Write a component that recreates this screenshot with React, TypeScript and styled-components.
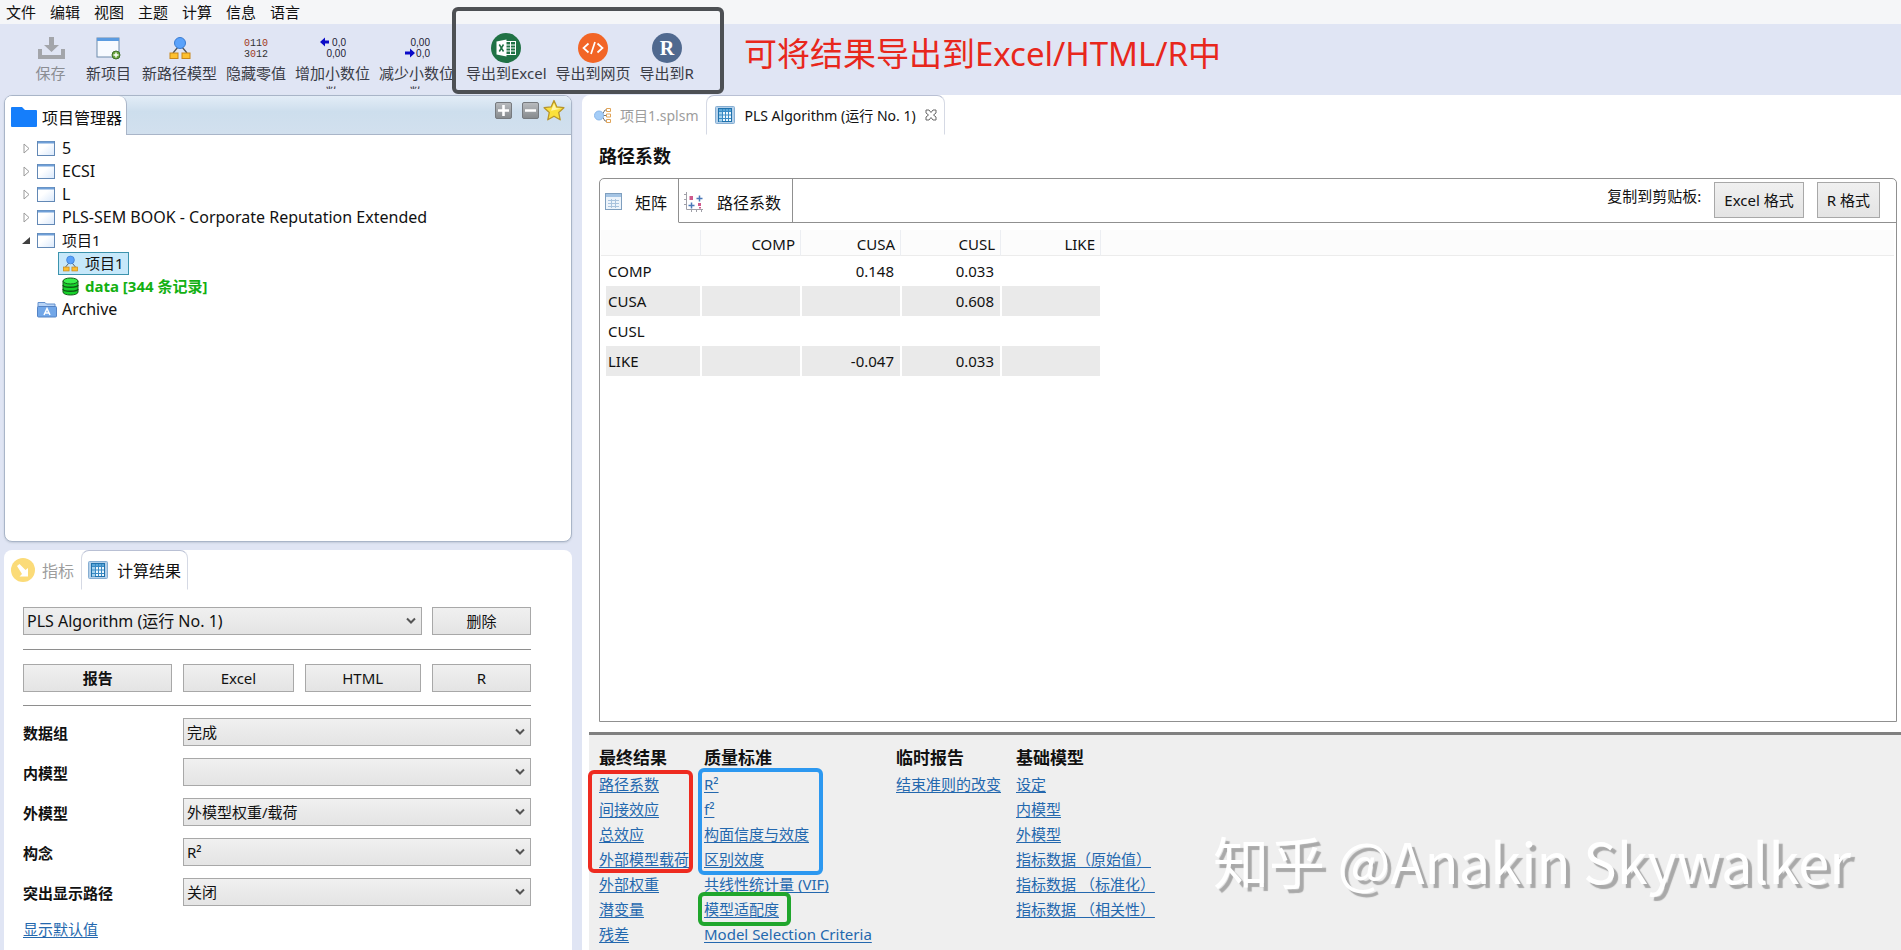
import React from 'react';
import styled, { createGlobalStyle, css } from 'styled-components';

const GlobalStyle = createGlobalStyle`
  *, *::before, *::after { box-sizing: border-box; }
  html, body { margin: 0; padding: 0; }
  body, button, select {
    font-family: "Noto Sans", "Noto Sans CJK SC", sans-serif;
    font-size: 15px;
    color: #111;
  }
  button { padding: 0; border: 0; background: none; cursor: pointer; }
  svg { display: block; flex: none; }
`;

const Page = styled.div`
  display: flex;
  flex-direction: column;
  height: 100vh;
  min-height: 860px;
  overflow: hidden;
  background: #e0e5f4;
`;

const MenuBar = styled.nav`
  display: flex;
  gap: 14px;
  height: 24px;
  padding: 1px 6px 0;
  background: #f5f6f8;
`;

const MenuItem = styled.button`
  height: 22px;
  line-height: 22px;
`;

const Toolbar = styled.div`
  display: flex;
  align-items: flex-start;
  gap: 1px;
  height: 71px;
  padding: 8px 0 0 22px;
`;

const ToolButton = styled.button<{ $muted?: boolean }>`
  display: flex;
  flex-direction: column;
  align-items: center;
  min-width: 57px;
  padding: 0 4px;
  color: ${p => (p.$muted ? '#8b8d93' : '#3a3c46')};
`;

const ToolIcon = styled.span`
  display: flex;
  align-items: center;
  justify-content: center;
  height: 31px;
`;

const ToolLabel = styled.span<{ $wrap?: boolean }>`
  height: 26px;
  line-height: 20px;
  overflow: hidden;
  white-space: nowrap;
  ${p => p.$wrap && css`
    width: 75px;
    white-space: normal;
  `}
`;

const Marked = styled.div<{ $color: string; $inset: string }>`
  position: relative;
  &::after {
    content: '';
    position: absolute;
    inset: ${p => p.$inset};
    border: 4px solid ${p => p.$color};
    border-radius: 6px;
    pointer-events: none;
  }
`;

const ExportGroup = styled(Marked)`
  display: flex;
  gap: 1px;
  margin-left: 3px;
`;

const Callout = styled.p`
  margin: 0 0 0 45px;
  font-size: 33px;
  line-height: 44px;
  color: #e8271c;
  white-space: nowrap;
`;

const Workspace = styled.div`
  flex: 1;
  min-height: 0;
  display: grid;
  grid-template-columns: 568px minmax(0, 1fr);
  gap: 10px;
  padding-left: 4px;
`;

const Sidebar = styled.div`
  display: flex;
  flex-direction: column;
  gap: 8px;
  min-height: 0;
`;

const Explorer = styled.section`
  flex: 1;
  min-height: 0;
  display: flex;
  flex-direction: column;
  overflow: hidden;
  background: #fff;
  border: 1px solid #a9b5c8;
  border-radius: 8px;
  box-shadow: 0 1px 2px #c3cbd9;
`;

const ExplorerHead = styled.header`
  display: flex;
  justify-content: space-between;
  height: 39px;
  background: linear-gradient(#e3edf7, #cddeed 40%, #d2e0ee);
`;

const ExplorerTitle = styled.h2`
  display: flex;
  align-items: center;
  gap: 4px;
  margin: 0;
  padding: 2px 4px 0 6px;
  font-size: 16px;
  font-weight: 400;
  background: #fff;
  border-right: 1px solid #a9b5c8;
  border-radius: 0 8px 0 0;
`;

const HeadFill = styled.div`
  flex: 1;
  display: flex;
  justify-content: flex-end;
  align-items: flex-start;
  gap: 10px;
  padding: 3px 6px 0 0;
  border-bottom: 1px solid #a9b5c8;
`;

const HeadTool = styled.button`
  height: 22px;
  display: flex;
  align-items: center;
`;

const StarTool = styled(HeadTool)`
  margin-left: -6px;
`;

const Tree = styled.ul`
  list-style: none;
  margin: 0;
  padding: 2px 0 0 17px;
`;

const TreeRow = styled.li<{ $level?: number; $latin?: boolean }>`
  display: flex;
  align-items: center;
  gap: 5px;
  height: 23px;
  padding-left: ${p => (p.$level ? 36 : 0)}px;
  line-height: 21px;
  font-size: ${p => (p.$latin ? 16 : 15)}px;
`;

const Twisty = styled.span`
  width: 10px;
`;

const TreeIcon = styled.span`
  width: 20px;
`;

const Leaf = styled.span<{ $selected?: boolean; $data?: boolean }>`
  display: flex;
  align-items: center;
  gap: 6px;
  height: 23px;
  padding: 0 4px 0 3px;
  border: 1px solid ${p => (p.$selected ? '#3c93ad' : 'transparent')};
  background: ${p => (p.$selected ? '#c6e8fa' : 'transparent')};
  color: ${p => (p.$data ? '#12b012' : 'inherit')};
  font-weight: ${p => (p.$data ? 700 : 400)};
`;

const Settings = styled.section`
  background: #fff;
  border-radius: 8px 8px 0 0;
  padding-bottom: 10px;
`;

const TabStrip = styled.div`
  display: flex;
  height: 40px;
`;

const Tab = styled.button<{ $active?: boolean }>`
  display: flex;
  align-items: center;
  gap: 9px;
  height: 40px;
  padding: 0 7px 0 8px;
  font-size: 14px;
  color: ${p => (p.$active ? '#111' : '#9d9d9d')};
  border: 1px solid transparent;
  ${p => p.$active && css`
    border-color: #b9c0d4 #d5d9e4 transparent;
    border-radius: 8px 8px 0 0;
  `}
`;

const SideTab = styled(Tab)`
  gap: ${p => (p.$active ? 9 : 7)}px;
  padding: 0 6px;
  font-size: 16px;
`;

const SettingsBody = styled.div`
  padding: 17px 41px 0 19px;
`;

const RunRow = styled.div`
  display: grid;
  grid-template-columns: 1fr 99px;
  gap: 10px;
  padding-bottom: 14px;
  border-bottom: 1px solid #8e8e8e;
`;

const ExportRow = styled.div`
  display: grid;
  grid-template-columns: 149fr 110fr 116fr 99fr;
  gap: 11px;
  padding: 14px 0 13px;
  border-bottom: 1px solid #8e8e8e;
`;

const PushButton = styled.button<{ $strong?: boolean }>`
  height: 28px;
  padding: 0 9px;
  line-height: 24px;
  background: linear-gradient(#f0f0f0, #e4e4e4);
  border: 1px solid #a8a8a8;
  font-weight: ${p => (p.$strong ? 700 : 400)};
  white-space: nowrap;
`;

const FormRow = styled.div`
  display: grid;
  grid-template-columns: 160px 1fr;
  align-items: center;
  margin-top: 12px;
`;

const FieldLabel = styled.label`
  font-weight: 700;
`;

const SelectBox = styled.span`
  display: grid;
  align-items: center;
  & > * { grid-area: 1 / 1; }
  & > svg { justify-self: end; margin-right: 6px; pointer-events: none; }
`;

const Dropdown = styled.select<{ $large?: boolean }>`
  appearance: none;
  width: 100%;
  height: 28px;
  padding: 0 24px 0 3px;
  font-size: ${p => (p.$large ? 16 : 15)}px;
  background: linear-gradient(#f0f0f0, #e4e4e4);
  border: 1px solid #a8a8a8;
  border-radius: 0;
`;

const Link = styled.a`
  color: #2468ae;
  text-decoration: underline;
  text-underline-offset: 2px;
  white-space: nowrap;
`;

const DefaultsLine = styled.p`
  margin: 12px 0 0;
  line-height: 22px;
`;

const Report = styled.main`
  display: flex;
  flex-direction: column;
  min-width: 0;
  min-height: 0;
  background: #fff;
  border-radius: 8px 0 0 0;
`;

const ReportTabs = styled(TabStrip)`
  padding-left: 3px;
`;

const ReportTitle = styled.h1`
  margin: 8px 0 9px 17px;
  font-size: 18px;
  line-height: 26px;
  font-weight: 700;
`;

const MatrixPanel = styled.section`
  flex: 1;
  min-height: 0;
  margin: 0 4px 10px 17px;
  border: 1px solid #909090;
  border-radius: 5px 5px 0 0;
`;

const MatrixHead = styled.div`
  display: flex;
  height: 44px;
`;

const MatrixTab = styled.button<{ $active?: boolean }>`
  display: flex;
  align-items: center;
  gap: 13px;
  padding: 2px 11px 0 5px;
  font-size: 16px;
  border-right: 1px solid #909090;
  border-bottom: 1px solid ${p => (p.$active ? 'transparent' : '#909090')};
`;

const ClipboardBar = styled.div`
  flex: 1;
  display: flex;
  justify-content: flex-end;
  align-items: flex-start;
  gap: 13px;
  padding: 3px 16px 0 0;
  border-bottom: 1px solid #909090;
`;

const ClipboardLabel = styled.span`
  line-height: 28px;
`;

const FormatButton = styled(PushButton)`
  height: 36px;
`;

const TableHeadBand = styled.div`
  margin: 7px 2px 0 1px;
  background: linear-gradient(#fcfcfc 25px, #ececec 25px) top / 100% 26px no-repeat;
`;

const Matrix = styled.table`
  border-collapse: separate;
  border-spacing: 0;
  table-layout: fixed;
  width: 500px;
  & th, & td { font-weight: 400; background-clip: padding-box; }
  & thead th {
    height: 26px;
    padding: 2px 5px 0;
    text-align: right;
    border-right: 1px solid #eceef2;
    border-bottom: 1px solid #ececec;
  }
  & tbody th { padding: 0 7px 0 2px; text-align: left; border-left: 5px solid #fff; }
  & tbody td { padding: 0 6px; text-align: right; border-left: 1px solid #fff; }
  & tbody th, & tbody td { height: 30px; border-right: 1px solid #fff; }
  & tbody tr:nth-child(even) > * { background-color: #eaeaea; }
`;

const ResultLinks = styled.footer`
  display: flex;
  gap: 36px;
  height: 218px;
  margin-left: 7px;
  padding: 11px 10px 0;
  background: #efefef;
  border-top: 3px solid #808080;
`;

const LinkColumn = styled.div<{ $width?: number }>`
  width: ${p => (p.$width ? p.$width + 'px' : 'auto')};
  line-height: 25px;
  white-space: nowrap;
`;

const LinkHeading = styled.h2`
  margin: 0;
  font-size: 17px;
  line-height: 24px;
  padding-bottom: 2px;
`;

const LinkItem = styled.div`
  height: 25px;
`;

const Watermark = styled.div`
  position: absolute;
  right: 50px;
  bottom: 50px;
  font-family: "Noto Sans CJK SC", sans-serif;
  font-size: 56px;
  line-height: 80px;
  color: #fff;
  text-shadow: 4px 4px 1px #a9a9a9;
  white-space: nowrap;
  pointer-events: none;
`;

const SaveIcon = () => (
  <svg width="28" height="24" viewBox="0 0 28 24">
    <path d="M12 1h5v8h5l-7.500 7L7 9h5zM1 13h4v6h19v-6h4v10H1z" fill="#a3a5aa" />
  </svg>
);

const NewProjectIcon = () => (
  <svg width="26" height="24" viewBox="0 0 26 24">
    <rect x="1" y="2" width="22" height="19" fill="#f7faff" stroke="#6c8bab" />
    <rect x="1" y="2" width="22" height="3" fill="#5b9be0" />
    <circle cx="20" cy="19" r="4" fill="#6aa53f" stroke="#3f6f2c" />
    <path d="M17.500 19h5M20 16.500v5" stroke="#fff" strokeWidth="1.400" />
  </svg>
);

const ModelIcon = ({ size = 24 }: { size?: number }) => (
  <svg width={size} height={size} viewBox="0 0 24 24">
    <path d="M10 11L5 17M14 11l5 6" stroke="#555" strokeWidth="1.300" />
    <circle cx="12" cy="7" r="5.500" fill="#5aa2fb" stroke="#3a7bd0" />
    <rect x="2" y="17" width="8" height="5.500" fill="#fdc02f" stroke="#c8871a" />
    <rect x="14" y="17" width="8" height="5.500" fill="#fdc02f" stroke="#c8871a" />
  </svg>
);

const HideZeroIcon = () => (
  <svg width="26" height="24" viewBox="0 0 26 24" fontFamily="Liberation Mono, monospace" fontSize="10" fill="#333">
    <text x="1" y="10"><tspan fill="#a03a20">0</tspan>11<tspan fill="#a03a20">0</tspan></text>
    <text x="1" y="21">3<tspan fill="#a03a20">0</tspan>12</text>
  </svg>
);

const MoreDecimalsIcon = () => (
  <svg width="28" height="24" viewBox="0 0 28 24" fontFamily="Liberation Sans, sans-serif" fontSize="10" fill="#223">
    <path d="M1 6l5-4.500v3h4v3H6v3z" fill="#0a0ac8" />
    <text x="27" y="10" textAnchor="end">0,0</text>
    <text x="27" y="21" textAnchor="end">0,00</text>
  </svg>
);

const LessDecimalsIcon = () => (
  <svg width="28" height="24" viewBox="0 0 28 24" fontFamily="Liberation Sans, sans-serif" fontSize="10" fill="#223">
    <path d="M12 17l-5-4.500v3H2v3h5v3z" fill="#0a0ac8" />
    <text x="27" y="10" textAnchor="end">0,00</text>
    <text x="27" y="21" textAnchor="end">0,0</text>
  </svg>
);

const ExcelIcon = () => (
  <svg width="30" height="30" viewBox="0 0 30 30">
    <circle cx="15" cy="15" r="15" fill="#207245" />
    <rect x="14" y="8.500" width="10.500" height="13" fill="none" stroke="#fff" />
    <path d="M14 12h10M14 15h10M14 18h10M19.500 8.500v13" stroke="#fff" strokeWidth="1" />
    <path d="M5.500 8.500l10-2v17l-10-2z" fill="#fff" />
    <path d="M8.300 11.500l4.200 7M12.500 11.500l-4.200 7" stroke="#207245" strokeWidth="1.500" />
  </svg>
);

const HtmlIcon = () => (
  <svg width="30" height="30" viewBox="0 0 30 30">
    <circle cx="15" cy="15" r="15" fill="#f26526" />
    <path d="M10.500 10.500L5.500 15l5 4.500M19.500 10.500l5 4.500-5 4.500M17 9l-4 12" fill="none" stroke="#fff" strokeWidth="1.700" />
  </svg>
);

const RIcon = () => (
  <svg width="30" height="30" viewBox="0 0 30 30">
    <circle cx="15" cy="15" r="15" fill="#50698f" />
    <text x="15" y="22" textAnchor="middle" fontFamily="Liberation Serif, serif" fontWeight="700" fontSize="20" fill="#fff">R</text>
  </svg>
);

const FolderIcon = () => (
  <svg width="27" height="22" viewBox="0 0 27 22">
    <path d="M0 2q0-1 1-1h10l3 3h11q1 0 1 1v15q0 1-1 1H1q-1 0-1-1z" fill="#157efb" />
  </svg>
);

const SquareTool = ({ plus }: { plus?: boolean }) => (
  <svg width="17" height="17" viewBox="0 0 17 17">
    <defs>
      <linearGradient id="toolGrey" x1="0" y1="0" x2="0" y2="1">
        <stop offset="0" stopColor="#b9bcbf" />
        <stop offset="1" stopColor="#85898c" />
      </linearGradient>
    </defs>
    <rect x="0.500" y="0.500" width="16" height="16" rx="1.500" fill="url(#toolGrey)" stroke="#767a7e" />
    <path d={plus ? 'M3 8.500h11M8.500 3v11' : 'M3 8.500h11'} stroke="#fff" strokeWidth="2.600" />
  </svg>
);

const StarIcon = () => (
  <svg width="22" height="23" viewBox="0 0 22 23">
    <path d="M11 1.500l2.900 6.400 7 .8-5.200 4.700 1.500 7.400-6.200-3.600-6.200 3.600 1.500-7.400L1.100 8.700l7-.8z" fill="#fbe13c" stroke="#b8962a" strokeWidth="1.300" strokeLinejoin="round" />
    <path d="M11 4.500l1.900 4.600 4.800.6-9.700 2z" fill="#fff6a8" />
  </svg>
);

const ProjectIcon = () => (
  <svg width="19" height="17" viewBox="0 0 19 17">
    <defs>
      <linearGradient id="windowBlue" x1="0" y1="0" x2="1" y2="1">
        <stop offset="0.400" stopColor="#fff" />
        <stop offset="1" stopColor="#d9e8fb" />
      </linearGradient>
    </defs>
    <rect x="0.500" y="1.500" width="17" height="14" fill="url(#windowBlue)" stroke="#6288b5" />
    <path d="M1 2.500h16" stroke="#6f9fd8" strokeWidth="2" />
  </svg>
);

const ClosedTwisty = () => (
  <svg width="9" height="11" viewBox="0 0 9 11">
    <path d="M2 1l5 4.500L2 10z" fill="#fff" stroke="#9a9a9a" />
  </svg>
);

const OpenTwisty = () => (
  <svg width="9" height="9" viewBox="0 0 9 9">
    <path d="M8 1v7H0z" fill="#404040" />
  </svg>
);

const DatabaseIcon = () => (
  <svg width="17" height="19" viewBox="0 0 17 19">
    <path d="M1 4v11c0 4 15 4 15 0V4z" fill="#17d32b" stroke="#175c1b" />
    <path d="M1 8c0 3 15 3 15 0M1 12c0 3 15 3 15 0" fill="none" stroke="#0d5a14" strokeWidth="1.400" />
    <ellipse cx="8.500" cy="4" rx="7.500" ry="3" fill="#3af04c" stroke="#175c1b" />
  </svg>
);

const ArchiveIcon = () => (
  <svg width="20" height="17" viewBox="0 0 20 17">
    <path d="M1 3V1.500h7L9.500 3H18v12H1z" fill="#b7d3f5" stroke="#6390cd" />
    <rect x="0.500" y="5.500" width="19" height="10.500" rx="1" fill="#72a7e8" stroke="#5583c4" />
    <path d="M7 14l3-6.500 3 6.500M8 12h4" stroke="#fff" strokeWidth="1.500" fill="none" />
  </svg>
);

const IndicatorIcon = () => (
  <svg width="24" height="24" viewBox="0 0 24 24">
    <circle cx="12" cy="12" r="12" fill="#fbdb78" />
    <path d="M6 8l2.500-2 6 6 2.500-2v8.500H8.500L11 16z" fill="#fff" />
  </svg>
);

const GridIcon = () => (
  <svg width="20" height="18" viewBox="0 0 20 18">
    <rect x="0.500" y="0.500" width="19" height="17" rx="1" fill="#b4d0ea" stroke="#86aed2" />
    <rect x="3.500" y="2.500" width="13" height="13" fill="#eef7fd" stroke="#1f72ac" />
    <rect x="4" y="3" width="12" height="2.500" fill="#5aa6d8" />
    <rect x="4" y="5.500" width="3" height="10" fill="#a5d2ee" />
    <path d="M4 5.500h12M7.500 3v12M10.500 3v12M13.500 3v12M4 9h12M4 12.500h12" stroke="#3a8ac4" />
  </svg>
);

const DiagramIcon = () => (
  <svg width="17" height="17" viewBox="0 0 17 17">
    <path d="M8 8.500h5M8 8l3-5h2M8 9l3 5h2" fill="none" stroke="#777" />
    <circle cx="5" cy="8.500" r="4.500" fill="#a5cdf7" stroke="#8ab7ea" />
    <path d="M12.500 1.500h4v3h-4zM12.500 7h4v3h-4zM12.500 12.500h4v3h-4z" fill="#fff" stroke="#e0a458" />
  </svg>
);

const CloseIcon = () => (
  <svg width="12" height="12" viewBox="0 0 12 12">
    <path d="M1 1h3l2 2.500L8 1h3v3L8.500 6 11 8v3H8L6 8.500 4 11H1V8l2.500-2L1 4z" fill="#fff" stroke="#666" />
  </svg>
);

const MatrixIcon = () => (
  <svg width="17" height="17" viewBox="0 0 17 17">
    <rect x="0.500" y="0.500" width="16" height="16" fill="#edf4fb" stroke="#7f9fbf" />
    <rect x="1" y="1" width="15" height="3" fill="#a4c4e4" />
    <path d="M3 7.500h11M3 10.500h11M3 13.500h11M6.500 6v9M10.500 6v9" stroke="#a9c3dd" />
  </svg>
);

const ScatterIcon = () => (
  <svg width="20" height="20" viewBox="0 0 20 20">
    <path d="M2.500 0v17.500H19M0 2.500h2M0 7.500h2M0 12.500h2M7.500 18v2M12.500 18v2M17.500 18v2" stroke="#a0a0a8" fill="none" />
    <path d="M5.500 4h3.500v4H5.500zM14 11h3v3h-3zM15 15h2v1.500h-2z" fill="#cf5a8c" />
    <path d="M12.500 6.500h6M15.500 3.500v6M4.500 13.500h6M7.500 10.500v6" stroke="#4a78b8" strokeWidth="1.500" />
  </svg>
);

const Chevron = () => (
  <svg width="10" height="8" viewBox="0 0 10 8">
    <path d="M1 1.500l4 4 4-4" fill="none" stroke="#555" strokeWidth="2" />
  </svg>
);

const menu = ['文件', '编辑', '视图', '主题', '计算', '信息', '语言'];

const tools = [
  { label: '保存', icon: <SaveIcon />, muted: true },
  { label: '新项目', icon: <NewProjectIcon /> },
  { label: '新路径模型', icon: <ModelIcon /> },
  { label: '隐藏零值', icon: <HideZeroIcon /> },
  { label: '增加小数位数', icon: <MoreDecimalsIcon />, wrap: true },
  { label: '减少小数位数', icon: <LessDecimalsIcon />, wrap: true },
];

const exportTools = [
  { label: '导出到Excel', icon: <ExcelIcon /> },
  { label: '导出到网页', icon: <HtmlIcon /> },
  { label: '导出到R', icon: <RIcon /> },
];

const projects = ['5', 'ECSI', 'L', 'PLS-SEM BOOK - Corporate Reputation Extended'];

const fields = [
  { id: 'group', label: '数据组', value: '完成' },
  { id: 'inner', label: '内模型', value: '' },
  { id: 'outer', label: '外模型', value: '外模型权重/载荷' },
  { id: 'construct', label: '构念', value: 'R²' },
  { id: 'highlight', label: '突出显示路径', value: '关闭' },
];

const variables = ['COMP', 'CUSA', 'CUSL', 'LIKE'];
const coefficients = [
  ['', '0.148', '0.033', ''],
  ['', '', '0.608', ''],
  ['', '', '', ''],
  ['', '-0.047', '0.033', ''],
];

const Tool = ({ label, icon, muted, wrap }: { label: string; icon: React.ReactNode; muted?: boolean; wrap?: boolean }) => (
  <ToolButton $muted={muted}>
    <ToolIcon>{icon}</ToolIcon>
    <ToolLabel $wrap={wrap}>{label}</ToolLabel>
  </ToolButton>
);

const Links = ({ items }: { items: string[] }) => (
  <>
    {items.map(item => (
      <LinkItem key={item}><Link href="#">{item}</Link></LinkItem>
    ))}
  </>
);

export default function App() {
  return (
    <Page>
      <GlobalStyle />
      <MenuBar>
        {menu.map(item => <MenuItem key={item}>{item}</MenuItem>)}
      </MenuBar>
      <Toolbar>
        {tools.map(tool => <Tool key={tool.label} {...tool} />)}
        <ExportGroup $color="#4d5054" $inset="-25px -26px -5px -10px">
          {exportTools.map(tool => <Tool key={tool.label} {...tool} />)}
        </ExportGroup>
        <Callout>可将结果导出到Excel/HTML/R中</Callout>
      </Toolbar>
      <Workspace>
        <Sidebar>
          <Explorer>
            <ExplorerHead>
              <ExplorerTitle><FolderIcon />项目管理器</ExplorerTitle>
              <HeadFill>
                <HeadTool aria-label="展开"><SquareTool plus /></HeadTool>
                <HeadTool aria-label="折叠"><SquareTool /></HeadTool>
                <StarTool aria-label="收藏"><StarIcon /></StarTool>
              </HeadFill>
            </ExplorerHead>
            <Tree>
              {projects.map(name => (
                <TreeRow key={name} $latin>
                  <Twisty><ClosedTwisty /></Twisty>
                  <TreeIcon><ProjectIcon /></TreeIcon>
                  {name}
                </TreeRow>
              ))}
              <TreeRow>
                <Twisty><OpenTwisty /></Twisty>
                <TreeIcon><ProjectIcon /></TreeIcon>
                项目1
              </TreeRow>
              <TreeRow $level={1}>
                <Leaf $selected><ModelIcon size={17} />项目1</Leaf>
              </TreeRow>
              <TreeRow $level={1}>
                <Leaf $data><DatabaseIcon />data [344 条记录]</Leaf>
              </TreeRow>
              <TreeRow $latin>
                <Twisty />
                <TreeIcon><ArchiveIcon /></TreeIcon>
                Archive
              </TreeRow>
            </Tree>
          </Explorer>
          <Settings>
            <TabStrip>
              <SideTab><IndicatorIcon />指标</SideTab>
              <SideTab $active><GridIcon />计算结果</SideTab>
            </TabStrip>
            <SettingsBody>
              <RunRow>
                <SelectBox>
                  <Dropdown $large aria-label="运行"><option>PLS Algorithm (运行 No. 1)</option></Dropdown>
                  <Chevron />
                </SelectBox>
                <PushButton>删除</PushButton>
              </RunRow>
              <ExportRow>
                <PushButton $strong>报告</PushButton>
                <PushButton>Excel</PushButton>
                <PushButton>HTML</PushButton>
                <PushButton>R</PushButton>
              </ExportRow>
              {fields.map(field => (
                <FormRow key={field.id}>
                  <FieldLabel htmlFor={field.id}>{field.label}</FieldLabel>
                  <SelectBox>
                    <Dropdown id={field.id}><option>{field.value}</option></Dropdown>
                    <Chevron />
                  </SelectBox>
                </FormRow>
              ))}
              <DefaultsLine><Link href="#">显示默认值</Link></DefaultsLine>
            </SettingsBody>
          </Settings>
        </Sidebar>
        <Report>
          <ReportTabs>
            <Tab><DiagramIcon />项目1.splsm</Tab>
            <Tab $active><GridIcon />PLS Algorithm (运行 No. 1)<CloseIcon /></Tab>
          </ReportTabs>
          <ReportTitle>路径系数</ReportTitle>
          <MatrixPanel>
            <MatrixHead>
              <MatrixTab $active><MatrixIcon />矩阵</MatrixTab>
              <MatrixTab><ScatterIcon />路径系数</MatrixTab>
              <ClipboardBar>
                <ClipboardLabel>复制到剪贴板:</ClipboardLabel>
                <FormatButton>Excel 格式</FormatButton>
                <FormatButton>R 格式</FormatButton>
              </ClipboardBar>
            </MatrixHead>
            <TableHeadBand>
              <Matrix>
                <colgroup>
                  <col width="100" />
                  {variables.map(name => <col key={name} width="100" />)}
                </colgroup>
                <thead>
                  <tr>
                    <th />
                    {variables.map(name => <th key={name} scope="col">{name}</th>)}
                  </tr>
                </thead>
                <tbody>
                  {coefficients.map((row, r) => (
                    <tr key={variables[r]}>
                      <th scope="row">{variables[r]}</th>
                      {row.map((value, c) => <td key={c}>{value}</td>)}
                    </tr>
                  ))}
                </tbody>
              </Matrix>
            </TableHeadBand>
          </MatrixPanel>
          <ResultLinks>
            <LinkColumn $width={69}>
              <LinkHeading>最终结果</LinkHeading>
              <Marked $color="#ee2b20" $inset="-2px -25px -1px -11px">
                <Links items={['路径系数', '间接效应', '总效应', '外部模型载荷']} />
              </Marked>
              <Links items={['外部权重', '潜变量', '残差']} />
            </LinkColumn>
            <LinkColumn $width={156}>
              <LinkHeading>质量标准</LinkHeading>
              <Marked $color="#2c98f0" $inset="-4px 37px -3px -6px">
                <Links items={['R²', 'f²', '构面信度与效度', '区别效度']} />
              </Marked>
              <Links items={['共线性统计量 (VIF)']} />
              <Marked $color="#20a62d" $inset="-5px 69px -4px -6px">
                <Links items={['模型适配度']} />
              </Marked>
              <Links items={['Model Selection Criteria']} />
            </LinkColumn>
            <LinkColumn $width={84}>
              <LinkHeading>临时报告</LinkHeading>
              <Links items={['结束准则的改变']} />
            </LinkColumn>
            <LinkColumn>
              <LinkHeading>基础模型</LinkHeading>
              <Links items={['设定', '内模型', '外模型', '指标数据（原始值）', '指标数据 （标准化）', '指标数据 （相关性）']} />
            </LinkColumn>
          </ResultLinks>
        </Report>
      </Workspace>
      <Watermark>知乎 @Anakin Skywalker</Watermark>
    </Page>
  );
}
